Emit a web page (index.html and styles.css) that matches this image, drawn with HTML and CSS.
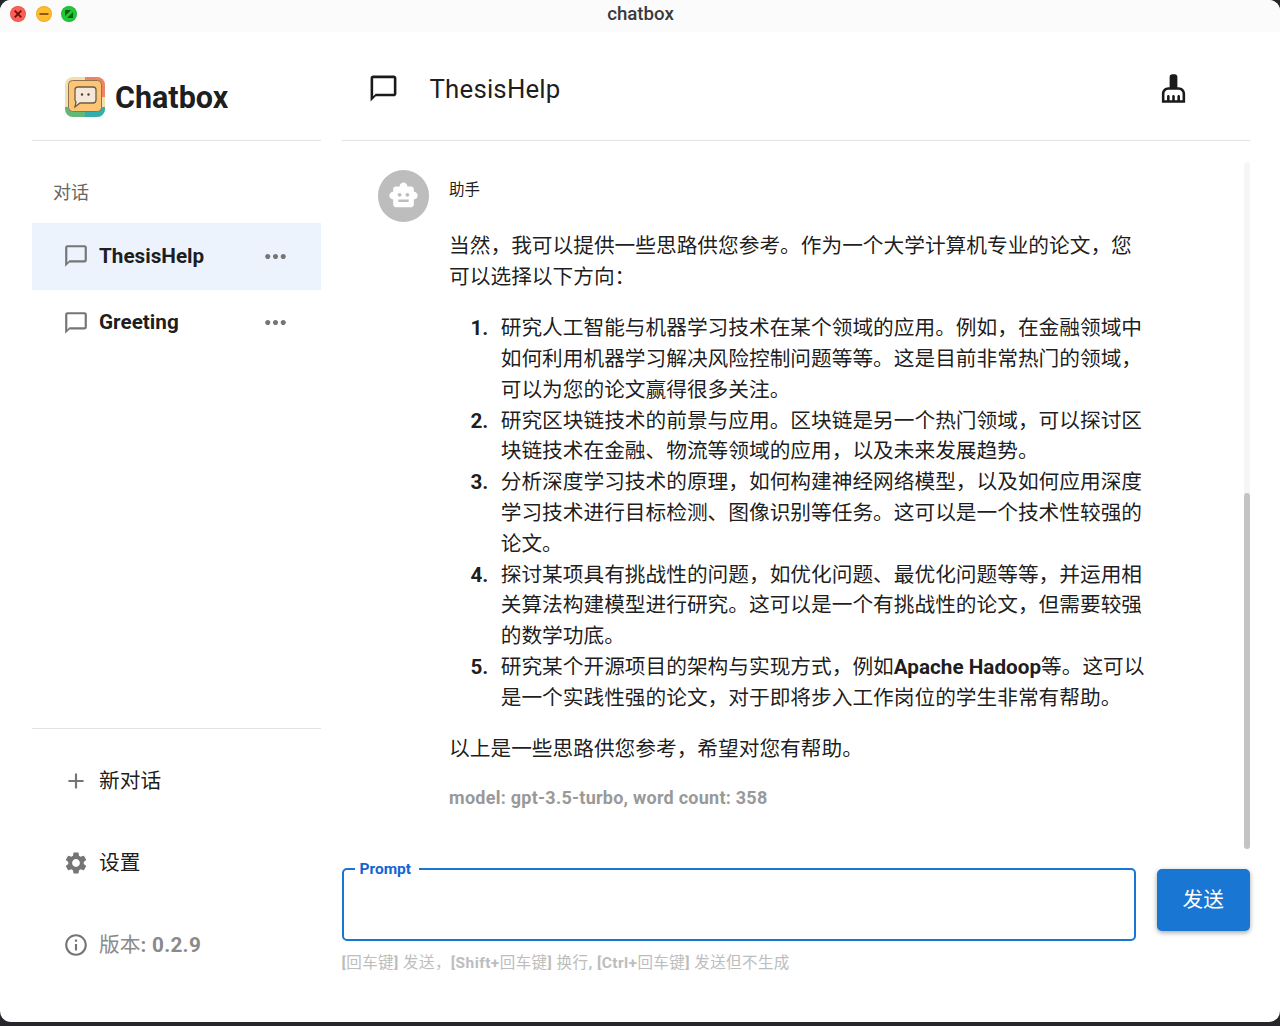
FILE: index.html
```html
<!DOCTYPE html>
<html lang="en">
<head>
    <meta charset="UTF-8">
    <meta name="viewport" content="width=device-width, initial-scale=1.0">
    <title>chatbox</title>
    <link rel="stylesheet" href="styles.css">
</head>
<body>
    <div class="window">
        <div class="titlebar">
            <div class="lights">
                <span class="light light-close">
                    <svg viewBox="0 0 16 16"><path d="M4.700 4.700l6.600 6.600M11.300 4.700l-6.600 6.600" stroke="#6b0f0a" stroke-width="1.800" fill="none"/></svg>
                </span>
                <span class="light light-min">
                    <svg viewBox="0 0 16 16"><path d="M3.500 8h9" stroke="#8f5a06" stroke-width="2" fill="none"/></svg>
                </span>
                <span class="light light-max">
                    <svg viewBox="0 0 16 16"><path d="M4 4h6L4 10zM12 12H6l6-6z" fill="#0b5c12"/></svg>
                </span>
            </div>
            <div class="window-title">chatbox</div>
        </div>

        <div class="app">
            <aside class="sidebar">
                <div class="brand">
                    <svg class="brand-logo" viewBox="0 0 40 40">
                        <rect width="40" height="40" rx="8" fill="#f2dfae"/>
                        <path d="M20 0h12a8 8 0 0 1 8 8v12H20z" fill="#ec8467"/>
                        <path d="M0 30h20v10H8a8 8 0 0 1-8-8z" fill="#62b878"/>
                        <path d="M20 30h20v2a8 8 0 0 1-8 8H20z" fill="#2fb0ad"/>
                        <rect x="3.500" y="3.500" width="33" height="31" rx="4" fill="#fcc573" stroke="#8d7350" stroke-width="1"/>
                        <path d="M13 10h15a3 3 0 0 1 3 3v10a3 3 0 0 1-3 3H15l-5 4 1-5a3 3 0 0 1-1-2V13a3 3 0 0 1 3-3z" fill="#f5e8da" stroke="#6e5a45" stroke-width="1.300"/>
                        <circle cx="17" cy="17.500" r="1.200" fill="#4d4038"/>
                        <circle cx="23.500" cy="17.500" r="1.200" fill="#4d4038"/>
                    </svg>
                    <span class="brand-name">Chatbox</span>
                </div>

                <div class="sidebar-label">对话</div>
                <ul class="session-list">
                    <li class="session session-active">
                        <svg class="icon" viewBox="0 0 24 24"><path d="M20 2H4c-1.100 0-2 .9-2 2v18l4-4h14c1.100 0 2-.9 2-2V4c0-1.100-.9-2-2-2zm0 14H6l-2 2V4h16v12z"/></svg>
                        <span class="session-name">ThesisHelp</span>
                        <svg class="icon icon-more" viewBox="0 0 24 24"><path d="M6 10c-1.100 0-2 .9-2 2s.9 2 2 2 2-.9 2-2-.9-2-2-2zm12 0c-1.100 0-2 .9-2 2s.9 2 2 2 2-.9 2-2-.9-2-2-2zm-6 0c-1.100 0-2 .9-2 2s.9 2 2 2 2-.9 2-2-.9-2-2-2z"/></svg>
                    </li>
                    <li class="session">
                        <svg class="icon" viewBox="0 0 24 24"><path d="M20 2H4c-1.100 0-2 .9-2 2v18l4-4h14c1.100 0 2-.9 2-2V4c0-1.100-.9-2-2-2zm0 14H6l-2 2V4h16v12z"/></svg>
                        <span class="session-name">Greeting</span>
                        <svg class="icon icon-more" viewBox="0 0 24 24"><path d="M6 10c-1.100 0-2 .9-2 2s.9 2 2 2 2-.9 2-2-.9-2-2-2zm12 0c-1.100 0-2 .9-2 2s.9 2 2 2 2-.9 2-2-.9-2-2-2zm-6 0c-1.100 0-2 .9-2 2s.9 2 2 2 2-.9 2-2-.9-2-2-2z"/></svg>
                    </li>
                </ul>

                <div class="sidebar-menu">
                    <div class="menu-item">
                        <svg class="icon" viewBox="0 0 24 24"><path d="M19 13h-6v6h-2v-6H5v-2h6V5h2v6h6v2z"/></svg>
                        <span>新对话</span>
                    </div>
                    <div class="menu-item">
                        <svg class="icon" viewBox="0 0 24 24"><path d="M19.140 12.940c.04-.3.06-.61.06-.94 0-.32-.02-.64-.07-.94l2.030-1.580c.18-.14.23-.41.12-.61l-1.920-3.320c-.12-.22-.37-.29-.59-.22l-2.390.96c-.5-.38-1.030-.7-1.620-.94l-.36-2.540c-.04-.24-.24-.41-.48-.41h-3.840c-.24 0-.43.17-.47.41l-.36 2.540c-.59.24-1.130.57-1.620.94l-2.390-.96c-.22-.08-.47 0-.59.22L2.740 8.870c-.12.21-.08.47.12.61l2.030 1.580c-.05.3-.09.63-.09.94s.02.64.07.94l-2.030 1.580c-.18.14-.23.41-.12.61l1.920 3.320c.12.22.37.29.59.22l2.390-.96c.5.38 1.030.7 1.620.94l.36 2.540c.05.24.24.41.48.41h3.840c.24 0 .44-.17.47-.41l.36-2.540c.59-.24 1.130-.56 1.620-.94l2.390.96c.22.08.47 0 .59-.22l1.920-3.320c.12-.22.07-.47-.12-.61l-2.010-1.580zM12 15.600c-1.980 0-3.600-1.620-3.600-3.600s1.620-3.600 3.600-3.600 3.600 1.620 3.600 3.600-1.620 3.600-3.600 3.600z"/></svg>
                        <span>设置</span>
                    </div>
                    <div class="menu-item menu-version">
                        <svg class="icon" viewBox="0 0 24 24"><path d="M11 7h2v2h-2zm0 4h2v6h-2zm1-9C6.480 2 2 6.480 2 12s4.480 10 10 10 10-4.480 10-10S17.520 2 12 2zm0 18c-4.410 0-8-3.590-8-8s3.590-8 8-8 8 3.590 8 8-3.590 8-8 8z"/></svg>
                        <span>版本<b>: 0.2.9</b></span>
                    </div>
                </div>
            </aside>

            <main class="chat">
                <header class="chat-header">
                    <svg class="icon icon-dark icon-head" viewBox="0 0 24 24"><path d="M20 2H4c-1.100 0-2 .9-2 2v18l4-4h14c1.100 0 2-.9 2-2V4c0-1.100-.9-2-2-2zm0 14H6l-2 2V4h16v12z"/></svg>
                    <h1 class="chat-title">ThesisHelp</h1>
                    <svg class="icon icon-dark icon-head" viewBox="0 0 24 24"><path d="M16 11h-1V3c0-1.100-.9-2-2-2h-2c-1.100 0-2 .9-2 2v8H8c-2.760 0-5 2.240-5 5v7h18v-7c0-2.760-2.240-5-5-5zm3 10h-2v-3c0-.55-.45-1-1-1s-1 .45-1 1v3h-2v-3c0-.55-.45-1-1-1s-1 .45-1 1v3H9v-3c0-.55-.45-1-1-1s-1 .45-1 1v3H5v-5c0-1.650 1.350-3 3-3h8c1.650 0 3 1.350 3 3v5z"/></svg>
                </header>

                <div class="messages-wrap">
                    <div class="message">
                        <div class="avatar">
                            <svg viewBox="0 0 24 24"><path d="M20 9V7c0-1.100-.9-2-2-2h-3c0-1.660-1.340-3-3-3S9 3.340 9 5H6c-1.100 0-2 .9-2 2v2c-1.660 0-3 1.340-3 3s1.340 3 3 3v4c0 1.100.9 2 2 2h12c1.100 0 2-.9 2-2v-4c1.660 0 3-1.340 3-3s-1.340-3-3-3zM7.500 11.500c0-.83.67-1.500 1.500-1.500s1.500.67 1.500 1.500S9.830 13 9 13s-1.500-.67-1.500-1.500zM16 17H8v-2h8v2zm-1-4c-.83 0-1.500-.67-1.500-1.500S14.170 10 15 10s1.500.67 1.500 1.500S15.830 13 15 13z"/></svg>
                        </div>
                        <div class="message-body">
                            <div class="message-role">助手</div>
                            <p>当然，我可以提供一些思路供您参考。作为一个大学计算机专业的论文，您可以选择以下方向：</p>
                            <ol>
                                <li>研究人工智能与机器学习技术在某个领域的应用。例如，在金融领域中如何利用机器学习解决风险控制问题等等。这是目前非常热门的领域，可以为您的论文赢得很多关注。</li>
                                <li>研究区块链技术的前景与应用。区块链是另一个热门领域，可以探讨区块链技术在金融、物流等领域的应用，以及未来发展趋势。</li>
                                <li>分析深度学习技术的原理，如何构建神经网络模型，以及如何应用深度学习技术进行目标检测、图像识别等任务。这可以是一个技术性较强的论文。</li>
                                <li>探讨某项具有挑战性的问题，如优化问题、最优化问题等等，并运用相关算法构建模型进行研究。这可以是一个有挑战性的论文，但需要较强的数学功底。</li>
                                <li>研究某个开源项目的架构与实现方式，例如<strong>Apache Hadoop</strong>等。这可以是一个实践性强的论文，对于即将步入工作岗位的学生非常有帮助。</li>
                            </ol>
                            <p>以上是一些思路供您参考，希望对您有帮助。</p>
                            <div class="message-meta">model: gpt-3.5-turbo, word count: 358</div>
                        </div>
                    </div>
                    <div class="scroll-track"><div class="scroll-thumb"></div></div>
                </div>

                <div class="composer">
                    <div class="composer-field">
                        <fieldset class="prompt">
                            <legend>Prompt</legend>
                            <textarea class="prompt-input" rows="1"></textarea>
                        </fieldset>
                        <div class="hint"><b>[</b>回车键<b>]</b> 发送，<b>[Shift+</b>回车键<b>]</b> 换行<b>, [Ctrl+</b>回车键<b>]</b> 发送但不生成</div>
                    </div>
                    <button class="send" type="button">发送</button>
                </div>
            </main>
        </div>
    </div>
</body>
</html>
```

FILE: styles.css
```css
/* Base styles */
* {
    box-sizing: border-box;
}

body {
    margin: 0;
    height: 1026px;
    overflow: hidden;
    background: #26262b;
    color: rgba(0,0,0,0.9);
    font-family: Roboto, "Noto Sans CJK SC", sans-serif;
    font-size: 20.7px;
    line-height: 30.8px;
}

.window {
    height: 1022px;
    display: flex;
    flex-direction: column;
    background: #fff;
    border-radius: 11px;
    overflow: hidden;
}

/* Title bar */
.titlebar {
    height: 32px;
    flex: none;
    display: grid;
    grid-template-columns: 1fr auto 1fr;
    align-items: center;
    background: #fbfbfb;
}

.lights {
    display: flex;
    gap: 9.500px;
    padding-left: 10px;
    margin-top: -4px;
}

.light {
    width: 16px;
    height: 16px;
    border-radius: 50%;
    box-shadow: inset 0 0 0 1px rgba(0,0,0,0.08);
}

.light svg {
    display: block;
}

.light-close {
    background: #fd5f57;
}

.light-min {
    background: #febc2e;
}

.light-max {
    background: #1fc933;
}

.window-title {
    grid-column: 2;
    font-size: 18.700px;
    line-height: 24px;
    font-weight: 500;
    color: #3a3a3a;
    margin: -5px 0 0 1px;
}

/* Layout */
.app {
    flex: 1;
    min-height: 0;
    display: grid;
    grid-template-columns: 289px 908.500px;
    column-gap: 20.500px;
    padding: 0 30px 0 32px;
}

.icon {
    width: 26px;
    height: 26px;
    flex: none;
    fill: #757575;
}

.icon-dark {
    fill: #1a1a1a;
}

.icon-head {
    width: 31px;
    height: 31px;
}

/* Sidebar */
.sidebar {
    display: flex;
    flex-direction: column;
    min-height: 0;
}

.brand {
    height: 109px;
    flex: none;
    display: flex;
    align-items: center;
    gap: 10px;
    padding: 24px 0 0 33px;
    border-bottom: 1.500px solid #e2e2e2;
}

.brand-logo {
    width: 40px;
    height: 40px;
    margin-top: -2px;
}

.brand-name {
    font-size: 30.500px;
    font-weight: 700;
    line-height: 1;
}

.sidebar-label {
    height: 82px;
    flex: none;
    display: flex;
    align-items: center;
    padding: 22px 21px 0;
    font-size: 18px;
    color: #666;
    line-height: 1;
}

.session-list {
    list-style: none;
    margin: 0;
    padding: 0;
    flex: 1;
}

.session {
    height: 66.500px;
    display: flex;
    align-items: center;
    gap: 10px;
    padding: 0 30px 0 31px;
}

.session-active {
    background: #edf3fc;
}

.session-name {
    flex: 1;
    font-weight: 700;
}

.icon-more {
    width: 31px;
    height: 31px;
}

.sidebar-menu {
    flex: none;
    padding: 11px 0 36px;
    border-top: 1.500px solid #e2e2e2;
}

.menu-item {
    height: 82px;
    display: flex;
    align-items: center;
    gap: 10px;
    padding-left: 31px;
}

.menu-version {
    color: #8a8a8a;
}

.menu-version b {
    letter-spacing: 0.3px;
}

/* Chat area */
.chat {
    display: flex;
    flex-direction: column;
    min-height: 0;
}

.chat-header {
    height: 109px;
    flex: none;
    display: flex;
    align-items: center;
    padding: 5px 61px 0 26px;
    border-bottom: 1.500px solid #e2e2e2;
}

.chat-title {
    flex: 1;
    margin: 2px 0 0 31px;
    font-size: 25.800px;
    font-weight: 400;
    line-height: 1.5;
    letter-spacing: 0.2px;
}

.messages-wrap {
    height: 687px;
    flex: none;
    margin-top: 21px;
    display: flex;
    justify-content: space-between;
    overflow: hidden;
}

.message {
    display: flex;
    gap: 20px;
    padding: 8px 0 0 36px;
    width: 804px;
}

.avatar {
    width: 51.600px;
    height: 51.600px;
    flex: none;
    display: flex;
    align-items: center;
    justify-content: center;
    border-radius: 50%;
    background: #bdbdbd;
}

.avatar svg {
    width: 31px;
    height: 31px;
    fill: #fff;
}

.message-body {
    flex: 1;
    min-width: 0;
}

.message-role {
    font-size: 15.500px;
    line-height: 22px;
    margin-top: 9px;
    margin-bottom: 30px;
}

.message-body p {
    margin: 0 0 20.640px;
}

.message-body ol {
    margin: 0 0 20.640px;
    padding-left: 51.600px;
}

.message-body li::marker {
    content: counter(list-item) ".\00a0\00a0\200a";
    font-weight: 700;
}

.message-meta {
    font-size: 18px;
    font-weight: 700;
    letter-spacing: 0.25px;
    color: #999;
    line-height: 27px;
    margin-top: -2px;
}

.scroll-track {
    width: 6px;
    display: flex;
    flex-direction: column;
    justify-content: flex-end;
    background: #f6f6f6;
    border-radius: 3px;
}

.scroll-thumb {
    height: 356px;
    background: #c4c4c4;
    border-radius: 3px;
}

/* Composer */
.composer {
    display: flex;
    align-items: flex-start;
    gap: 21px;
    margin-top: 10px;
}

.composer-field {
    flex: 1;
    min-width: 0;
}

.prompt {
    height: 82px;
    margin: 0;
    padding: 0 11px;
    border: 2.600px solid #1976d2;
    border-radius: 5px;
}

.prompt legend {
    padding: 0 8px 0 5px;
    font-size: 15.500px;
    font-weight: 700;
    line-height: 20px;
    color: #1565d0;
}

.prompt-input {
    display: block;
    width: 100%;
    border: 0;
    outline: 0;
    resize: none;
    background: transparent;
}

.hint {
    margin-top: 10px;
    font-size: 15.500px;
    letter-spacing: 0.43px;
    line-height: 24px;
    color: #bdbdbd;
}

.send {
    width: 93.500px;
    height: 62px;
    flex: none;
    margin-top: 10px;
    padding: 0 0 5px;
    border: none;
    border-radius: 5px;
    background: #1976d2;
    color: #fff;
    font-family: inherit;
    font-size: 20.640px;
    box-shadow: 0 2px 4px rgba(0,0,0,0.25), 0 1px 6px rgba(0,0,0,0.12);
}
```
